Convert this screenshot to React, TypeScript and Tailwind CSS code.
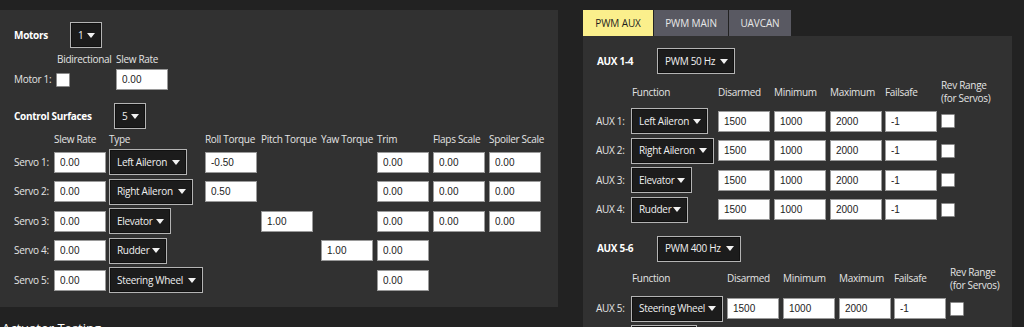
import React from "react";

const Caret = () => (
  <svg width="8" height="5" viewBox="0 0 8 5" className="shrink-0">
    <polygon points="0,0 8,0 4,5" fill="#f2f2f2" />
  </svg>
);

function Select({ text, w }: { text: string; w: string }) {
  return (
    <div
      className={`${w} h-[26px] shrink-0 border border-[#b4b4b4] bg-[#1c1c1c] shadow-[inset_0_0_0_1px_#111] flex items-center justify-between pl-[7px] pr-[6px] text-[10px] tracking-[-0.3px] text-[#f0f0f0] whitespace-nowrap`}
    >
      <span>{text}</span>
      <Caret />
    </div>
  );
}

function Field({ value }: { value: string }) {
  return (
    <input
      readOnly
      value={value}
      className="block w-[52px] h-[21px] bg-white border border-[#9a9a9a] pl-[5px] text-[10px] tracking-normal font-['Liberation_Sans',Arial,sans-serif] text-[#222] outline-none"
    />
  );
}

function Check() {
  return <div className="w-[14px] h-[14px] bg-white border border-[#8a8a8a] rounded-[1px]" />;
}

const servoCols = "grid grid-cols-[40px_55px_96px_56px_60px_56px_56px_56px_60px] items-center";

const servos = [
  { n: 1, type: "Left Aileron", w: "w-[78px]", roll: "-0.50", pitch: "", yaw: "", trim: "0.00", flaps: "0.00", spoil: "0.00" },
  { n: 2, type: "Right Aileron", w: "w-[84px]", roll: "0.50", pitch: "", yaw: "", trim: "0.00", flaps: "0.00", spoil: "0.00" },
  { n: 3, type: "Elevator", w: "w-[62px]", roll: "", pitch: "1.00", yaw: "", trim: "0.00", flaps: "0.00", spoil: "0.00" },
  { n: 4, type: "Rudder", w: "w-[58px]", roll: "", pitch: "", yaw: "1.00", trim: "0.00", flaps: "", spoil: "" },
  { n: 5, type: "Steering Wheel", w: "w-[94px]", roll: "", pitch: "", yaw: "", trim: "0.00", flaps: "", spoil: "" },
];

function Opt({ v }: { v: string }) {
  return <div>{v ? <Field value={v} /> : null}</div>;
}

function LeftPanel() {
  return (
    <div className="w-[558px] h-[297px] shrink-0 bg-[#313131] pt-[12px] pl-[14px] flex flex-col text-[10px] tracking-[-0.3px] text-[#e4e4e4] whitespace-nowrap">
      <div className="flex items-center h-[26px]">
        <span className="w-[56px] font-bold text-white">Motors</span>
        <Select text="1" w="w-[32px]" />
      </div>
      <div className="flex items-center h-[18px] mt-[2px]">
        <span className="w-[43px]" />
        <span className="w-[59px]">Bidirectional</span>
        <span>Slew Rate</span>
      </div>
      <div className="flex items-center h-[23px]">
        <span className="w-[42px]">Motor 1:</span>
        <div className="w-[60px]">
          <Check />
        </div>
        <Field value="0.00" />
      </div>
      <div className="flex items-center h-[26px] mt-[12px]">
        <span className="w-[100px] font-bold text-white">Control Surfaces</span>
        <Select text="5" w="w-[32px]" />
      </div>
      <div className={`${servoCols} h-[20px]`}>
        <span />
        <span>Slew Rate</span>
        <span>Type</span>
        <span>Roll Torque</span>
        <span>Pitch Torque</span>
        <span>Yaw Torque</span>
        <span>Trim</span>
        <span>Flaps Scale</span>
        <span>Spoiler Scale</span>
      </div>
      <div className="flex flex-col gap-[3.5px]">
        {servos.map((s) => (
          <div key={s.n} className={`${servoCols} h-[26px]`}>
            <span>Servo {s.n}:</span>
            <Field value="0.00" />
            <Select text={s.type} w={s.w} />
            <Opt v={s.roll} />
            <Opt v={s.pitch} />
            <Opt v={s.yaw} />
            <Opt v={s.trim} />
            <Opt v={s.flaps} />
            <Opt v={s.spoil} />
          </div>
        ))}
      </div>
    </div>
  );
}

type AuxRow = { n: number; fn: string; w: string };

function AuxTable({
  title,
  rate,
  rateW,
  cols,
  rows,
  headerH,
}: {
  title: string;
  rate: string;
  rateW: string;
  cols: string;
  rows: AuxRow[];
  headerH: string;
}) {
  return (
    <div className="flex flex-col">
      <div className="flex items-center h-[26px]">
        <span className="w-[60px] font-bold text-white">{title}</span>
        <Select text={rate} w={rateW} />
      </div>
      <div className={`${cols} ${headerH} items-center`}>
        <span />
        <span className="pl-[1px]">Function</span>
        <span>Disarmed</span>
        <span>Minimum</span>
        <span>Maximum</span>
        <span>Failsafe</span>
        <span className="leading-[13px]">
          Rev Range
          <br />
          (for Servos)
        </span>
      </div>
      <div className="flex flex-col gap-[3.6px]">
        {rows.map((r) => (
          <div key={r.n} className={`${cols} h-[26px] items-center`}>
            <span className="-ml-[1px]">AUX {r.n}:</span>
            <Select text={r.fn} w={r.w} />
            <Field value="1500" />
            <Field value="1000" />
            <Field value="2000" />
            <Field value="-1" />
            <Check />
          </div>
        ))}
      </div>
    </div>
  );
}

function RightPanel() {
  return (
    <div className="w-[429px] shrink-0 flex flex-col">
      <div className="flex h-[26px] shrink-0 gap-[1px] text-[10px] tracking-[-0.1px]">
        <div className="w-[70px] bg-[#fbef8c] text-[#1d1d1d] flex items-center justify-center">PWM AUX</div>
        <div className="w-[74px] bg-[#595962] text-[#e8e8e8] flex items-center justify-center">PWM MAIN</div>
        <div className="w-[62px] bg-[#595962] text-[#e8e8e8] flex items-center justify-center">UAVCAN</div>
      </div>
      <div className="shrink-0 bg-[#313131] pt-[12px] pl-[14px] pb-[20px] text-[10px] tracking-[-0.3px] text-[#e4e4e4] flex flex-col whitespace-nowrap">
        <AuxTable
          title="AUX 1-4"
          rate="PWM 50 Hz"
          rateW="w-[78px]"
          cols="grid grid-cols-[34px_87px_56px_56px_55px_56px_80px]"
          headerH="h-[32px] mt-[2px]"
          rows={[
            { n: 1, fn: "Left Aileron", w: "w-[77px]" },
            { n: 2, fn: "Right Aileron", w: "w-[83px]" },
            { n: 3, fn: "Elevator", w: "w-[61px]" },
            { n: 4, fn: "Rudder", w: "w-[57px]" },
          ]}
        />
        <div className="mt-[13px]">
          <AuxTable
            title="AUX 5-6"
            rate="PWM 400 Hz"
            rateW="w-[84px]"
            cols="grid grid-cols-[34px_96px_56px_56px_55px_56px_80px]"
            headerH="h-[34px]"
            rows={[
              { n: 5, fn: "Steering Wheel", w: "w-[92px]" },
              { n: 6, fn: "Rudder", w: "w-[66px]" },
            ]}
          />
        </div>
      </div>
    </div>
  );
}

export default function App() {
  return (
    <div className="w-[1024px] h-[327px] overflow-hidden bg-[#222222] pt-[10px] flex items-start gap-[25px] font-['Open_Sans','Noto_Sans',sans-serif]">
      <div className="flex flex-col shrink-0">
        <LeftPanel />
        <div className="mt-[11px] pl-[2px] text-[13px] text-white leading-[20px] whitespace-nowrap">Actuator Testing</div>
      </div>
      <RightPanel />
    </div>
  );
}
